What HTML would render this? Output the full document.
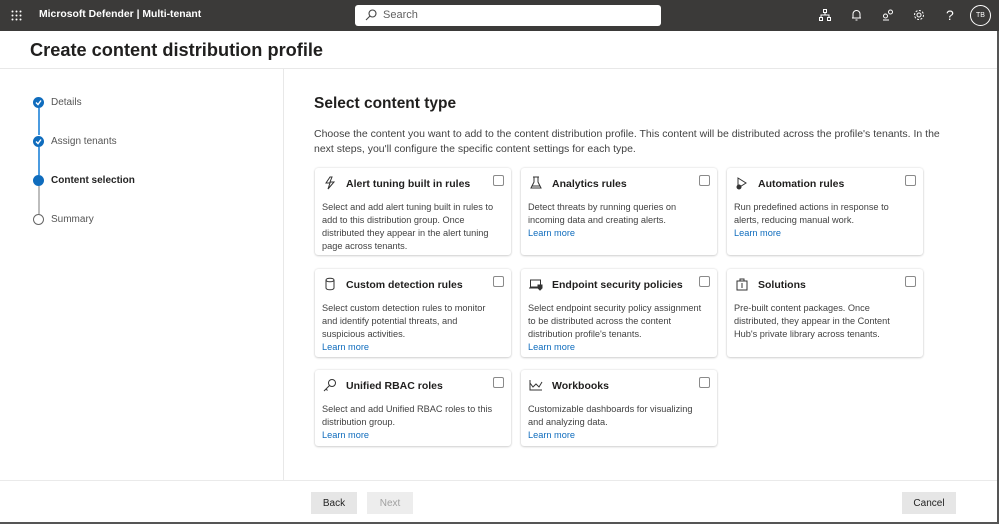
<!DOCTYPE html>
<html><head><meta charset="utf-8"><style>
*{box-sizing:border-box;margin:0;padding:0}
body{width:999px;height:524px;overflow:hidden;font-family:"Liberation Sans",sans-serif;background:#fff;position:relative;color:#242424}
.hdr{position:absolute;left:0;top:0;width:999px;height:31px;background:#3b3a39}
.hdr .t{position:absolute;left:39px;top:9px;color:#fff;font-size:10.4px;font-weight:bold}
.search{position:absolute;left:355px;top:5px;width:306px;height:21px;background:#fff;border-radius:3px;font-size:11px;color:#616161;padding:4px 0 0 28px}
.ti{position:absolute;color:#fff;font-size:12px;top:9px}
.title{position:absolute;left:30px;top:40px;font-size:18.2px;font-weight:bold;color:#201f1e}
.hline{position:absolute;left:0;top:68px;width:999px;height:1px;background:#e8e8e8}
.vline{position:absolute;left:283px;top:69px;width:1px;height:411px;background:#e8e8e8}
.fline{position:absolute;left:0;top:480px;width:999px;height:1px;background:#eaeaea}
.step{position:absolute;left:51px;font-size:10px;color:#555}
.dot{position:absolute;left:33px;width:11px;height:11px;border-radius:50%;background:#0f6cbd}
.conn{position:absolute;left:37.5px;width:2px;background:#4b9be0}
h2{position:absolute;left:314px;top:95px;font-size:15.5px;font-weight:bold;color:#201f1e}
.desc{position:absolute;left:314px;top:127px;width:640px;font-size:10.5px;line-height:15px;color:#424242}
.card{position:absolute;width:196px;background:#fff;border-radius:3px;box-shadow:0 0 2px rgba(0,0,0,.15),0 1px 2px rgba(0,0,0,.14);padding:0 7px}
.card .h{position:absolute;left:31px;top:10px;font-size:10.5px;font-weight:bold;color:#201f1e}
.card .ic{position:absolute;left:8px;top:8px;width:14px;height:14px}
.card .cb{position:absolute;right:7px;top:7px;width:11px;height:11px;border:1px solid #8a8a8a;border-radius:2px}
.card .b{position:absolute;left:7px;top:33px;width:178px;font-size:9.2px;line-height:13px;color:#424242}
.lm{color:#0f6cbd}
.btn{position:absolute;top:492px;height:22px;background:#e6e6e6;font-size:10px;text-align:center;padding-top:6px;color:#242424}
</style></head><body>
<div class="hdr">
<svg style="position:absolute;left:11px;top:10px" width="11" height="11" fill="#fff"><circle cx="1.5" cy="1.5" r="1"/><circle cx="5.5" cy="1.5" r="1"/><circle cx="9.5" cy="1.5" r="1"/><circle cx="1.5" cy="5.5" r="1"/><circle cx="5.5" cy="5.5" r="1"/><circle cx="9.5" cy="5.5" r="1"/><circle cx="1.5" cy="9.5" r="1"/><circle cx="5.5" cy="9.5" r="1"/><circle cx="9.5" cy="9.5" r="1"/></svg>
<div class="t">Microsoft Defender | Multi-tenant</div>
<div class="search"><svg style="position:absolute;left:10px;top:4px" width="12" height="12" fill="none" stroke="#444" stroke-width="1.1"><circle cx="7.5" cy="4.5" r="3.5"/><path d="M5 7L1 11"/></svg>Search</div>
<svg class="ti" style="left:819px" width="12" height="12" fill="none" stroke="#fff"><rect x="4.5" y="0.5" width="3" height="3"/><rect x="0.5" y="8.5" width="3" height="3"/><rect x="8.5" y="8.5" width="3" height="3"/><path d="M6 3.5V6M2 8.5V6h8v2.5"/></svg>
<svg class="ti" style="left:851px" width="11" height="12" fill="none" stroke="#fff"><path d="M2 9V5a3.5 3.5 0 0 1 7 0v4zM1 9h9M4.5 11h2"/></svg>
<svg class="ti" style="left:882px" width="12" height="12" fill="none" stroke="#fff"><circle cx="8.5" cy="3" r="2"/><circle cx="3.5" cy="7" r="2"/><path d="M1 11h6"/></svg>
<svg class="ti" style="left:913px" width="12" height="12" fill="none" stroke="#fff"><circle cx="6" cy="6" r="2"/><circle cx="6" cy="6" r="4.5" stroke-dasharray="2 1.5"/></svg>
<div class="ti" style="left:946px;top:7px;font-size:14px">?</div>
<div style="position:absolute;left:970px;top:5px;width:21px;height:21px;border:1px solid #fff;border-radius:50%;color:#fff;font-size:7px;text-align:center;padding-top:6px">TB</div>
</div>
<div class="title">Create content distribution profile</div>
<div class="hline"></div><div class="vline"></div><div class="fline"></div>
<div class="conn" style="top:108px;height:27px"></div>
<div class="conn" style="top:147px;height:28px"></div>
<div class="conn" style="top:186px;height:28px;background:#bdbdbd"></div>
<div class="dot" style="top:97px"></div><svg style="position:absolute;left:35px;top:99px" width="7" height="7" fill="none" stroke="#fff" stroke-width="1.4"><path d="M1 3.5l2 2 3-4"/></svg>
<div class="dot" style="top:136px"></div><svg style="position:absolute;left:35px;top:138px" width="7" height="7" fill="none" stroke="#fff" stroke-width="1.4"><path d="M1 3.5l2 2 3-4"/></svg>
<div class="dot" style="top:175px"></div>
<div class="dot" style="top:214px;background:#fff;border:1px solid #666"></div>
<div class="step" style="top:97px">Details</div>
<div class="step" style="top:136px">Assign tenants</div>
<div class="step" style="top:175px;font-weight:bold;color:#242424">Content selection</div>
<div class="step" style="top:214px">Summary</div>
<h2>Select content type</h2>
<div class="desc">Choose the content you want to add to the content distribution profile. This content will be distributed across the profile's tenants. In the next steps, you'll configure the specific content settings for each type.</div>

<div class="card" style="left:315px;top:168px;height:87px"><svg class="ic" fill="none" stroke="#333"><path d="M7 1L3 7h4l-2 6 6-7H7l2-5z"/></svg><div class="h">Alert tuning built in rules</div><div class="cb"></div><div class="b">Select and add alert tuning built in rules to add to this distribution group. Once distributed they appear in the alert tuning page across tenants.</div></div>
<div class="card" style="left:521px;top:168px;height:87px"><svg class="ic" fill="none" stroke="#333"><path d="M4 1h6M5 1v5l-3 6h10l-3-6V1M3 10h8"/></svg><div class="h">Analytics rules</div><div class="cb"></div><div class="b">Detect threats by running queries on incoming data and creating alerts.<br><span class="lm">Learn more</span></div></div>
<div class="card" style="left:727px;top:168px;height:87px"><svg class="ic" fill="none" stroke="#333"><path d="M3 2l8 5-8 5z"/><circle cx="4" cy="11" r="2" fill="#333"/></svg><div class="h">Automation rules</div><div class="cb"></div><div class="b">Run predefined actions in response to alerts, reducing manual work.<br><span class="lm">Learn more</span></div></div>

<div class="card" style="left:315px;top:269px;height:88px"><svg class="ic" fill="none" stroke="#333"><ellipse cx="7" cy="3" rx="4" ry="1.8"/><path d="M3 3v8c0 1 1.8 1.8 4 1.8s4-.8 4-1.8V3"/></svg><div class="h">Custom detection rules</div><div class="cb"></div><div class="b">Select custom detection rules to monitor and identify potential threats, and suspicious activities.<br><span class="lm">Learn more</span></div></div>
<div class="card" style="left:521px;top:269px;height:88px"><svg class="ic" fill="none" stroke="#333"><rect x="1.5" y="3" width="10" height="7"/><path d="M0 11h9"/><path d="M9 8h4v3l-2 2-2-2z" fill="#333"/></svg><div class="h">Endpoint security policies</div><div class="cb"></div><div class="b">Select endpoint security policy assignment to be distributed across the content distribution profile's tenants.<br><span class="lm">Learn more</span></div></div>
<div class="card" style="left:727px;top:269px;height:88px"><svg class="ic" fill="none" stroke="#333"><rect x="2" y="4" width="10" height="9"/><path d="M5 4V2h4v2M7 6v5"/></svg><div class="h">Solutions</div><div class="cb"></div><div class="b">Pre-built content packages. Once distributed, they appear in the Content Hub's private library across tenants.</div></div>

<div class="card" style="left:315px;top:370px;height:76px"><svg class="ic" fill="none" stroke="#333"><circle cx="9" cy="5" r="3.5"/><path d="M6.5 7.5L1 13M3 11l1.5 1.5"/></svg><div class="h">Unified RBAC roles</div><div class="cb"></div><div class="b">Select and add Unified RBAC roles to this distribution group.<br><span class="lm">Learn more</span></div></div>
<div class="card" style="left:521px;top:370px;height:76px"><svg class="ic" fill="none" stroke="#333"><path d="M1 2v10h12M1 5l3 4 3-3 3 3 3-5"/></svg><div class="h">Workbooks</div><div class="cb"></div><div class="b">Customizable dashboards for visualizing and analyzing data.<br><span class="lm">Learn more</span></div></div>

<div class="btn" style="left:311px;width:46px">Back</div>
<div class="btn" style="left:367px;width:46px;color:#a0a0a0;background:#ededed">Next</div>
<div class="btn" style="left:902px;width:54px">Cancel</div>
<div style="position:absolute;right:0;top:31px;width:2px;height:493px;background:#555"></div>
<div style="position:absolute;left:0;bottom:0;width:999px;height:2px;background:#555"></div>
</body></html>
